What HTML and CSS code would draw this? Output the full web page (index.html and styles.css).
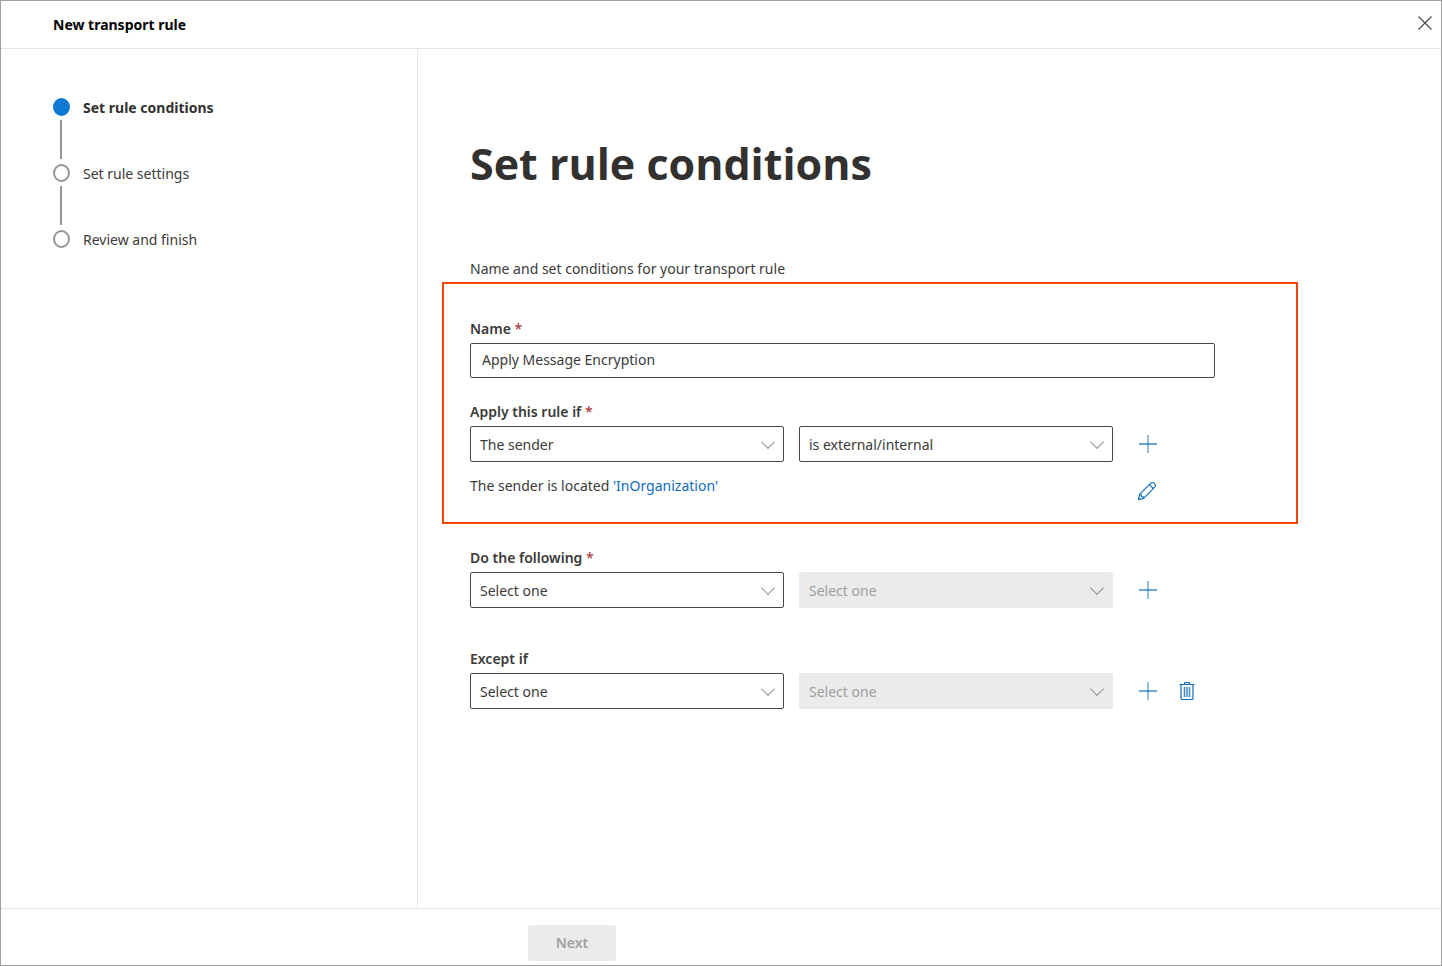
FILE: index.html
```html
<!DOCTYPE html>
<html lang="en">
<head>
    <meta charset="UTF-8">
    <meta name="viewport" content="width=device-width, initial-scale=1.0">
    <title>New transport rule</title>
    <link rel="stylesheet" href="styles.css">
</head>
<body>
<svg class="sprite" aria-hidden="true">
    <symbol id="icon-plus" viewBox="0 0 20 20">
        <path d="M10 1v18" stroke="#0f6cbd" stroke-opacity="0.45" stroke-width="2"/>
        <path d="M1 10h18" stroke="#0f6cbd" stroke-opacity="0.6" stroke-width="2"/>
    </symbol>
</svg>
<div class="panel">
    <header class="panel-header">
        <h2>New transport rule</h2>
        <button type="button" class="close-btn" aria-label="Close">
            <svg width="14" height="14" viewBox="0 0 14 14"><path d="M0.5 0.5l13 13M13.5 0.5l-13 13" fill="none" stroke="#444" stroke-width="1.1"/></svg>
        </button>
    </header>

    <div class="panel-body">
        <nav class="steps">
            <ol>
                <li class="step active"><span class="dot"></span><span>Set rule conditions</span></li>
                <li class="step"><span class="dot"></span><span>Set rule settings</span></li>
                <li class="step"><span class="dot"></span><span>Review and finish</span></li>
            </ol>
        </nav>

        <main class="content">
            <form id="rule-form">
                <h1>Set rule conditions</h1>
                <p class="intro">Name and set conditions for your transport rule</p>

                <div class="highlight">
                    <div class="form-group name-group">
                        <label for="name">Name <span class="required">*</span></label>
                        <input type="text" id="name" value="Apply Message Encryption">
                    </div>
                    <div class="form-group">
                        <label for="apply-if">Apply this rule if <span class="required">*</span></label>
                        <div class="row">
                            <div class="select"><select id="apply-if"><option>The sender</option></select></div>
                            <div class="select"><select aria-label="Condition"><option>is external/internal</option></select></div>
                            <button type="button" class="icon-btn" aria-label="Add condition"><svg width="20" height="20"><use href="#icon-plus"/></svg></button>
                        </div>
                    </div>
                    <div class="summary">
                        <p>The sender is located <a href="#">'InOrganization'</a></p>
                        <button type="button" class="icon-btn" aria-label="Edit condition">
                            <svg width="20" height="20" viewBox="0 0 20 20" fill="none" stroke="#0f6cbd" stroke-width="1.2" stroke-linejoin="round">
                                <path d="M0.4 18.6l1.2-5.2L12.8 2.2a2.3 2.3 0 0 1 3.3 0l.6.6a2.3 2.3 0 0 1 0 3.3L5.6 17.4z"/>
                                <path d="M11.400 3.600l4 4M1.600 13.400c1.300 0 2 .7 2 2 1.300 0 2 .7 2 2"/>
                            </svg>
                        </button>
                    </div>
                </div>

                <div class="form-group plain-group">
                    <label for="action">Do the following <span class="required">*</span></label>
                    <div class="row">
                        <div class="select"><select id="action"><option>Select one</option></select></div>
                        <div class="select"><select aria-label="Action detail" disabled><option>Select one</option></select></div>
                        <button type="button" class="icon-btn" aria-label="Add action"><svg width="20" height="20"><use href="#icon-plus"/></svg></button>
                    </div>
                </div>

                <div class="form-group plain-group">
                    <label for="except">Except if</label>
                    <div class="row">
                        <div class="select"><select id="except"><option>Select one</option></select></div>
                        <div class="select"><select aria-label="Exception detail" disabled><option>Select one</option></select></div>
                        <button type="button" class="icon-btn" aria-label="Add exception"><svg width="20" height="20"><use href="#icon-plus"/></svg></button>
                        <button type="button" class="icon-btn" aria-label="Delete exception">
                            <svg width="16" height="18" viewBox="0 0 16 18" fill="none" stroke="#0f6cbd">
                                <path d="M0.5 2.5h15M5.5 2.5v-1q0-1 1-1h3q1 0 1 1v1" stroke-width="1.2"/>
                                <path d="M2 2.500v13.500q0 1.500 1.500 1.500h9q1.500 0 1.500-1.500V2.500" stroke-width="1.2"/>
                                <path d="M5.500 5v10M8 5v10M10.500 5v10" stroke-opacity="0.800" stroke-width="1.500"/>
                            </svg>
                        </button>
                    </div>
                </div>
            </form>
        </main>
    </div>

    <footer class="panel-footer">
        <button type="submit" form="rule-form" class="next-btn" disabled>Next</button>
    </footer>
</div>
</body>
</html>
```
FILE: styles.css
```css
* {
    box-sizing: border-box;
}
body {
    margin: 0;
    font-family: "Noto Sans", "Open Sans", sans-serif;
    font-size: 14px;
    line-height: 20px;
    color: #3b3a39;
    background: #fff;
}
.sprite {
    display: none;
}
.panel {
    display: flex;
    flex-direction: column;
    min-height: 100vh;
    border: 1px solid #a0a0a0;
}
.panel-header {
    display: flex;
    justify-content: space-between;
    align-items: center;
    height: 48px;
    padding: 0 4px 0 52px;
    border-bottom: 1px solid #e5e5e5;
}
.panel-header h2 {
    margin: 0;
    font-size: 14px;
    font-weight: 700;
    color: #000;
}
button, input, select {
    font: inherit;
    color: inherit;
}
.close-btn, .icon-btn {
    display: flex;
    align-items: center;
    justify-content: center;
    padding: 0;
    border: none;
    background: none;
    cursor: pointer;
}
.close-btn {
    width: 24px;
    height: 24px;
    margin-bottom: 4px;
}
.panel-body {
    display: flex;
    flex: 1;
}

/* wizard steps */
.steps {
    flex: 0 0 417px;
    padding: 49px 52px;
    border-right: 1px solid #e5e5e5;
}
.steps ol {
    margin: 0;
    padding: 0;
    list-style: none;
}
.step {
    position: relative;
    display: flex;
    gap: 13px;
    height: 66px;
}
.step.active {
    font-weight: 700;
    color: #323130;
}
.dot {
    width: 17px;
    height: 18px;
    border: 2px solid #979593;
    border-radius: 50%;
}
.active .dot {
    border-color: #0f78d4;
    background: #0f78d4;
}
.step:not(:last-child)::after {
    content: "";
    position: absolute;
    left: 7px;
    top: 22px;
    width: 2px;
    height: 39px;
    background: #979593;
}

/* form */
.content {
    flex: 1;
    padding: 82px 24px;
}
#rule-form {
    max-width: 856px;
}
h1 {
    margin: 0 28px 62px;
    font-family: "Open Sans", "Noto Sans", sans-serif;
    font-size: 43px;
    line-height: 66px;
    font-weight: 700;
    color: #323130;
}
.intro {
    margin: 0 28px 3px;
}
.highlight {
    padding: 35px 26px 14px;
    border: 2px solid #f24405;
}
.form-group label {
    display: block;
    margin-bottom: 4px;
    font-weight: 600;
}
.required {
    font-weight: 400;
    color: #a4262c;
}
.name-group {
    max-width: 745px;
    margin-bottom: 24px;
}
.name-group input {
    display: block;
    width: 100%;
    height: 35px;
    padding: 0 11px 2px;
    border: 1px solid #484644;
    border-radius: 2px;
}
.row {
    display: flex;
}
.select {
    position: relative;
    flex: 0 1 314px;
    margin-right: 15px;
}
.select select {
    display: block;
    width: 100%;
    height: 36px;
    padding: 1px 32px 0 9px;
    border: 1px solid #484644;
    border-radius: 2px;
    background: #fff;
    appearance: none;
}
.select select:disabled {
    border-color: #ebebeb;
    background: #ebebeb;
    color: #a19f9d;
    opacity: 1;
}
.select::after {
    content: "";
    position: absolute;
    right: 11px;
    top: 11px;
    width: 9px;
    height: 9px;
    border: solid #979593;
    border-width: 0 1px 1px 0;
    transform: rotate(45deg);
    pointer-events: none;
}
.icon-btn {
    flex: none;
    width: 39px;
    height: 35px;
}
.summary {
    display: flex;
    max-width: 697px;
    margin-top: 11px;
}
.summary p {
    flex: 1;
    margin: 3px 0 0;
}
.summary a {
    color: #0f6cbd;
    text-decoration: none;
}
.plain-group {
    margin: 24px 28px 41px;
}

.panel-footer {
    padding: 16px 24px 4px 527px;
    border-top: 1px solid #e5e5e5;
}
.next-btn {
    display: block;
    width: 88px;
    height: 36px;
    border: none;
    border-radius: 2px;
    background: #ebebeb;
    color: #a19f9d;
    font-weight: 600;
}
```
